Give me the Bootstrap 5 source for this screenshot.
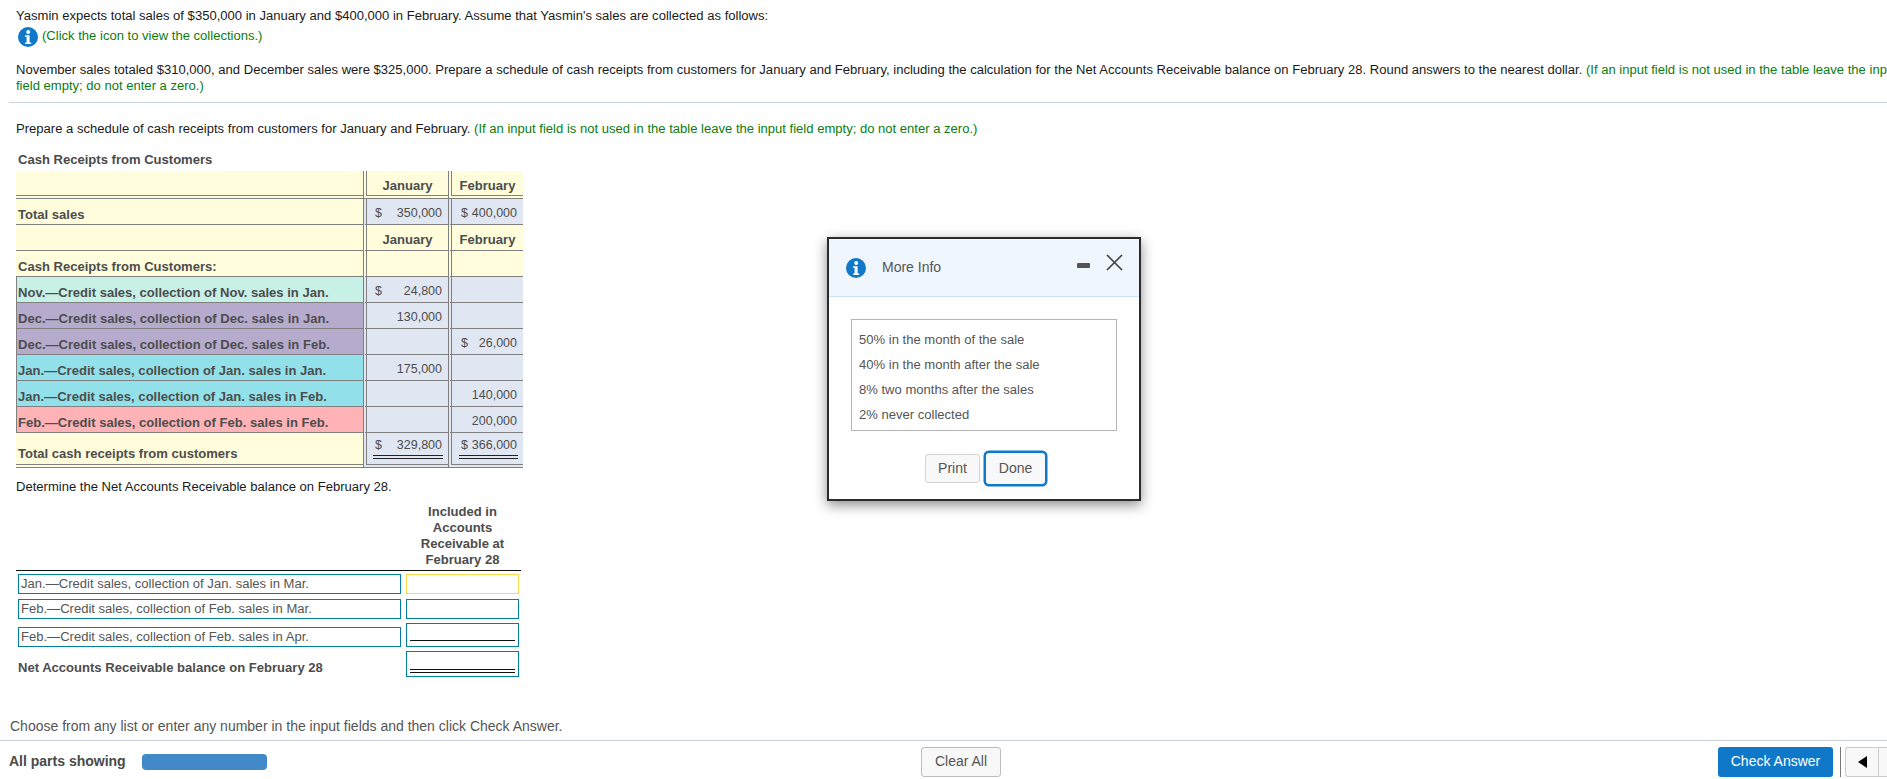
<!DOCTYPE html>
<html lang="en">
<head>
<meta charset="utf-8">
<title>Cash Receipts</title>
<link href="https://cdn.jsdelivr.net/npm/bootstrap@5.3.0/dist/css/bootstrap.min.css" rel="stylesheet">
<style>
html,body{height:779px;overflow:hidden}
body{font-family:"Liberation Sans",Arial,sans-serif;font-size:13.05px;line-height:16px;color:#1a1a1a;background:#fff;white-space:nowrap;position:relative}
.page-main{height:740px;overflow:hidden}
.q-line{margin:0 0 0 16px}
.hint{color:#0a7d10}
.info-ico{flex:none;display:block}
.rule-top{height:1px;background:#ccd2e0;margin-left:9px}
.cap{color:#4a4a4a;font-weight:bold;margin:0 0 0 18px;height:18px;line-height:18px}
.sched{width:507px;table-layout:fixed;border-collapse:separate;border-spacing:0;margin-left:16px;color:#4d4d4d}
.sched td{height:26px;padding:0;border-bottom:1px solid #808080;background:#e1e7f2;vertical-align:top;line-height:22px}
.sched .c-l{width:347px;font-weight:bold;background:#fffddc;vertical-align:bottom;padding:0 2px;line-height:19px}
.sched .c-j{width:85px;border-left:4px double #808080;padding:3px 6px 0 8px}
.sched .c-f{width:75px;border-left:4px double #808080;padding:3px 6px 0 9px}
.sched .h{background:#fffddc;font-weight:bold;text-align:center;vertical-align:top;padding:6px 0 0;line-height:18px}
.sched .dbl td{height:28px;border-bottom:4px double #808080}
.sched .c-l.t{background:#c7f0e6;border-left:1px solid #808080;padding-left:1px}
.sched .c-l.p{background:#b7abcd;border-left:1px solid #808080;padding-left:1px}
.sched .c-l.b{background:#92e1ea;border-left:1px solid #808080;padding-left:1px}
.sched .c-l.r{background:#ffb3b6;border-left:1px solid #808080;padding-left:1px}
.amt{display:flex;justify-content:space-between;height:20px;font-size:12.5px}
.amt.end{justify-content:flex-end}
.sum{border-bottom:4px double #222;height:23px;margin:0 -1px 0 -2px;padding:0 1px 0 2px;line-height:18px}
.sched .tot td{height:35px;border-bottom:4px double #808080}
.sched .tot .c-l{padding-bottom:1px}
.recv{width:505px;margin-left:16px;color:#4d4d4d}
.recv-h{display:flex;justify-content:flex-end;border-bottom:1px solid #111;height:67px;padding-right:2px}
.recv-h div{width:113px;text-align:center;font-weight:bold;line-height:16px;white-space:normal;padding:0 2px}
.recv-r{display:flex;align-items:flex-end;gap:5px;padding-left:2px}
.box{border:1px solid #007fa3;height:20px;display:block}
.lab{width:383px;line-height:17px;padding-left:2px;color:#555}
.val{width:113px;position:relative}
.val.y{border-color:#ffd84d}
.u1,.u2{position:absolute;left:3px;right:3px;bottom:5px}
.u1{border-bottom:1px solid #111}
.u2{border-bottom:4px double #111;bottom:3px}
.netlab{width:383px;font-weight:bold;height:26px;line-height:34px;padding-left:0}
.ch-txt{margin:0 0 0 10px;color:#555;font-size:14px}
.foot{border-top:1px solid #ccd2e0;height:39px;position:relative;display:flex;align-items:flex-start;padding-top:6px}
.parts{color:#4a4a4a;font-weight:bold;font-size:14px;margin-left:9px;width:133px;line-height:28px}
.meter{width:125px;height:16px;background:#4388c9;border-radius:4px;margin-top:7px}
.btn-clear{position:absolute;left:921px;top:6px;width:80px;height:30px;border:1px solid #bdbdbd;border-radius:3px;background:#f8f8f8;color:#555;font-size:14px;padding:0 0 2px;line-height:26px}
.right-tools{margin-left:auto;display:flex;align-items:flex-start}
.btn-answer{width:115px;height:30px;background:#0f78c8;color:#fff;border:0;border-radius:3px;font-size:14px;padding:0 0 2px}
.vbar{width:1px;height:30px;background:#777;margin:0 4px 0 7px}
.pager{width:42px;height:30px;border:1px solid #ccc;border-right:0;border-radius:3px 0 0 3px;background:#f8f8f8;display:flex}
.pager i{display:flex;align-items:center;justify-content:center;width:33px;border-right:1px solid #ccc}
.dialog{position:absolute;left:827px;top:237px;width:314px;height:264px;background:#fff;border:2px solid #2b2b2b;box-shadow:0 4px 12px rgba(0,0,0,.45);color:#555}
.dlg-head{height:58px;background:#f0f6fe;border-bottom:1px solid #c8e3f7;display:flex;align-items:center;padding:0 0 0 17px;position:relative;font-size:14px}
.dlg-head span{margin-left:16px;margin-top:-1px}
.dash{position:absolute;left:248px;top:24px;width:13px;height:5px;background:#555;border-radius:1px}
.xmark{position:absolute;left:277px;top:15px}
.dlg-list{margin:22px 22px 0 22px;height:112px;border:1px solid #b5b5b5;padding:12px 7px}
.dlg-list p{margin:0 0 9px;height:16px;line-height:16px}
.dlg-btns{display:flex;justify-content:center;align-items:center;gap:4px;margin-top:20px;margin-left:4px}
.b-print{width:55px;height:29px;border:1px solid #d4d4d4;border-radius:3px;background:#f8f8f8;color:#555;font-size:14px;padding:0}
.b-done{width:63px;height:35px;border:2px solid #0f78c8;border-radius:5px;background:#f8f8f8;color:#555;font-size:14px;padding:0;box-shadow:0 0 0 .5px #0f78c8}
</style>
</head>
<body>
<div class="page-main">
  <p class="q-line" style="padding-top:8px">Yasmin expects total sales of $350,000 in January and $400,000 in February. Assume that Yasmin's sales are collected as follows:</p>
  <div class="d-flex align-items-center" style="margin:3px 0 0 18px;height:20px">
    <svg class="info-ico" width="20" height="20" viewBox="0 0 20 20"><circle cx="10" cy="10" r="10" fill="#0f78c8"/><circle cx="10.2" cy="5" r="2" fill="#fff"/><path d="M7 8.2h4.6v7.2h1.6v1.6H7v-1.6h1.6V9.8H7z" fill="#fff"/></svg>
    <span class="hint" style="margin-left:4px;margin-top:-3px">(Click the icon to view the collections.)</span>
  </div>
  <p class="q-line" style="margin-top:15px">November sales totaled $310,000, and December sales were $325,000. Prepare a schedule of cash receipts from customers for January and February, including the calculation for the Net Accounts Receivable balance on February 28. Round answers to the nearest dollar. <span class="hint">(If an input field is not used in the table leave the input<br>field empty; do not enter a zero.)</span></p>
  <div class="rule-top" style="margin-top:8px"></div>
  <p class="q-line" style="margin-top:18px">Prepare a schedule of cash receipts from customers for January and February. <span class="hint">(If an input field is not used in the table leave the input field empty; do not enter a zero.)</span></p>
  <p class="cap" style="margin-top:14px;margin-bottom:2px">Cash Receipts from Customers</p>
  <table class="sched">
    <tr class="dbl"><td class="c-l"></td><td class="c-j h">January</td><td class="c-f h">February</td></tr>
    <tr><td class="c-l">Total sales</td><td class="c-j"><div class="amt"><span>$</span><span>350,000</span></div></td><td class="c-f"><div class="amt"><span>$</span><span>400,000</span></div></td></tr>
    <tr><td class="c-l"></td><td class="c-j h">January</td><td class="c-f h">February</td></tr>
    <tr><td class="c-l">Cash Receipts from Customers:</td><td class="c-j h"></td><td class="c-f h"></td></tr>
    <tr><td class="c-l t">Nov.—Credit sales, collection of Nov. sales in Jan.</td><td class="c-j"><div class="amt"><span>$</span><span>24,800</span></div></td><td class="c-f"></td></tr>
    <tr><td class="c-l p">Dec.—Credit sales, collection of Dec. sales in Jan.</td><td class="c-j"><div class="amt end"><span>130,000</span></div></td><td class="c-f"></td></tr>
    <tr><td class="c-l p">Dec.—Credit sales, collection of Dec. sales in Feb.</td><td class="c-j"></td><td class="c-f"><div class="amt"><span>$</span><span>26,000</span></div></td></tr>
    <tr><td class="c-l b">Jan.—Credit sales, collection of Jan. sales in Jan.</td><td class="c-j"><div class="amt end"><span>175,000</span></div></td><td class="c-f"></td></tr>
    <tr><td class="c-l b">Jan.—Credit sales, collection of Jan. sales in Feb.</td><td class="c-j"></td><td class="c-f"><div class="amt end"><span>140,000</span></div></td></tr>
    <tr><td class="c-l r">Feb.—Credit sales, collection of Feb. sales in Feb.</td><td class="c-j"></td><td class="c-f"><div class="amt end"><span>200,000</span></div></td></tr>
    <tr class="tot"><td class="c-l">Total cash receipts from customers</td><td class="c-j"><div class="amt sum"><span>$</span><span>329,800</span></div></td><td class="c-f"><div class="amt sum"><span>$</span><span>366,000</span></div></td></tr>
  </table>
  <p class="q-line" style="margin-top:11px">Determine the Net Accounts Receivable balance on February 28.</p>
  <div class="recv" style="margin-top:9px">
    <div class="recv-h"><div>Included in Accounts Receivable at February 28</div></div>
    <div class="recv-r" style="margin-top:3px"><span class="box lab">Jan.—Credit sales, collection of Jan. sales in Mar.</span><span class="box val y"></span></div>
    <div class="recv-r" style="margin-top:5px"><span class="box lab">Feb.—Credit sales, collection of Feb. sales in Mar.</span><span class="box val"></span></div>
    <div class="recv-r" style="margin-top:4px"><span class="box lab">Feb.—Credit sales, collection of Feb. sales in Apr.</span><span class="box val" style="height:24px"><span class="u1"></span></span></div>
    <div class="recv-r" style="margin-top:4px"><span class="netlab">Net Accounts Receivable balance on February 28</span><span class="box val" style="height:26px"><span class="u2"></span></span></div>
  </div>
  <p class="ch-txt" style="margin-top:41px">Choose from any list or enter any number in the input fields and then click Check Answer.</p>
</div>
<div class="foot">
  <div class="parts">All parts showing</div>
  <div class="meter"></div>
  <button type="button" class="btn btn-clear">Clear All</button>
  <div class="right-tools">
    <button type="button" class="btn btn-answer">Check Answer</button>
    <div class="vbar"></div>
    <div class="pager"><i><svg width="9" height="12" viewBox="0 0 9 12"><path d="M9 0v12L0 6z" fill="#000"/></svg></i></div>
  </div>
</div>
<div class="dialog">
  <div class="dlg-head">
    <svg class="info-ico" width="20" height="20" viewBox="0 0 20 20"><circle cx="10" cy="10" r="10" fill="#0f78c8"/><circle cx="10.2" cy="5" r="2" fill="#fff"/><path d="M7 8.2h4.6v7.2h1.6v1.6H7v-1.6h1.6V9.8H7z" fill="#fff"/></svg>
    <span>More Info</span>
    <div class="dash"></div>
    <svg class="xmark" width="17" height="17" viewBox="0 0 17 17"><path d="M1 1l15 15M16 1L1 16" stroke="#444" stroke-width="1.7" fill="none"/></svg>
  </div>
  <div class="dlg-list">
    <p>50% in the month of the sale</p>
    <p>40% in the month after the sale</p>
    <p>8% two months after the sales</p>
    <p>2% never collected</p>
  </div>
  <div class="dlg-btns">
    <button type="button" class="btn b-print">Print</button>
    <button type="button" class="btn b-done">Done</button>
  </div>
</div>
</body>
</html>
